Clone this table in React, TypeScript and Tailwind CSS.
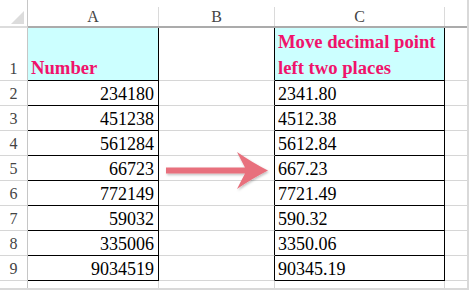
const rows: { n: string; a: string; c: string }[] = [
  { n: '2', a: '234180', c: '2341.80' },
  { n: '3', a: '451238', c: '4512.38' },
  { n: '4', a: '561284', c: '5612.84' },
  { n: '5', a: '66723', c: '667.23' },
  { n: '6', a: '772149', c: '7721.49' },
  { n: '7', a: '59032', c: '590.32' },
  { n: '8', a: '335006', c: '3350.06' },
  { n: '9', a: '9034519', c: '90345.19' },
];

const rowHead = 'flex items-end justify-center pb-[1px] border-r border-b border-r-[#c6c6c6] border-b-[#d6d6d6] text-[16px] leading-[20px] text-[#444]';

const ColHead = ({ label, last }: { label: string; last?: boolean }) => (
  <div className="border-b-2 border-[#ababab] pt-[7px]">
    <div
      className={`h-full text-center text-[16px] leading-[20px] text-[#444] ${
        last ? '' : 'border-r border-[#dadada]'
      }`}
    >
      {label}
    </div>
  </div>
);

const Arrow = () => (
  <svg className="pointer-events-none absolute left-0 top-0" width="469" height="290" viewBox="0 0 469 290">
    <defs>
      <filter id="sh" x="-10%" y="-30%" width="120%" height="160%">
        <feDropShadow dx="1" dy="1.5" stdDeviation="1.2" floodColor="#000" floodOpacity="0.25" />
      </filter>
    </defs>
    <path
      d="M166 167.5 L245 167.5 Q241 160 237 152 Q253 163 268 170.5 Q253 178 237 189 Q241 181 245 173.5 L166 173.5 Z"
      fill="#e8707d"
      filter="url(#sh)"
    />
  </svg>
);

export default function App() {
  return (
    <div className="relative flex h-[290px] w-[469px] flex-col overflow-hidden bg-white font-['Liberation_Serif','Times_New_Roman',serif]">
      <div className="flex flex-1">
        <div className="grid w-[467px] grid-cols-[28px_131px_116px_170px_22px] grid-rows-[28px_53px_repeat(8,25px)_7px]">
          {/* column headers */}
          <div className="border-r border-b-2 border-r-[#c6c6c6] border-b-[#dcdcdc]">
            <svg width="27" height="26" viewBox="0 0 27 26">
              <path d="M11 24 L24 11 L24 24 Z" fill="#dcdcdc" />
            </svg>
          </div>
          <ColHead label="A" />
          <ColHead label="B" />
          <ColHead label="C" />
          <ColHead label="" last />

          {/* row 1 */}
          <div className={rowHead}>1</div>
          <div className="border-r border-b border-black bg-[#ccffff] pl-[3px] pt-[27px] text-[18.67px] font-bold leading-[26px] text-[#f0136b]">
            Number
          </div>
          <div className="border-r border-b border-r-black border-b-[#d6d6d6]" />
          <div className="border-r border-b border-black bg-[#ccffff] pl-[3px] pt-[1px] text-[18.67px] font-bold leading-[26px] text-[#f0136b]">
            Move decimal point
            <br />
            left two places
          </div>
          <div className="border-b border-[#d6d6d6]" />

          {rows.map((r) => (
            <div key={r.n} className="contents">
              <div className={rowHead}>{r.n}</div>
              <div className="flex items-end justify-end border-r border-b border-black pb-[1px] pr-[4px] text-[18px] leading-[20px] text-black">
                {r.a}
              </div>
              <div className="border-r border-b border-r-black border-b-[#d6d6d6]" />
              <div className="flex items-end border-r border-b border-black pb-[1px] pl-[3px] text-[18px] leading-[20px] text-black">
                {r.c}
              </div>
              <div className="border-b border-[#d6d6d6]" />
            </div>
          ))}

          {/* partial row */}
          <div className="border-r border-[#c6c6c6]" />
          <div className="border-r border-[#d6d6d6]" />
          <div className="border-r border-[#d6d6d6]" />
          <div className="border-r border-[#d6d6d6]" />
          <div />
        </div>
        <div className="w-[2px] bg-[#d9d9d9]" />
      </div>
      <div className="h-[2px] bg-[#d9d9d9]" />
      <Arrow />
    </div>
  );
}
